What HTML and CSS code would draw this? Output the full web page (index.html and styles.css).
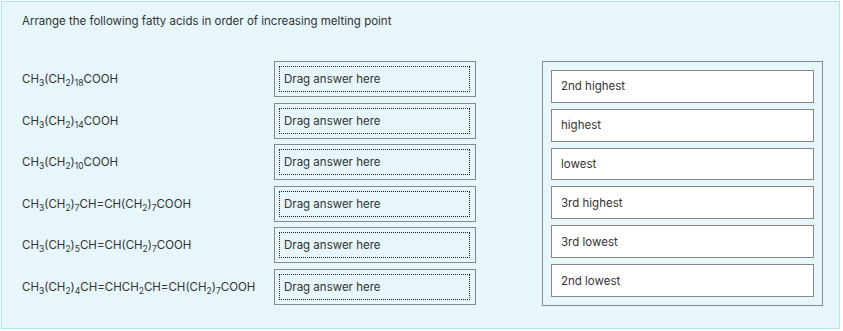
FILE: index.html
```html
<!DOCTYPE html>
<html lang="en">
<head>
    <meta charset="UTF-8">
    <meta name="viewport" content="width=device-width, initial-scale=1.0">
    <title>Fatty acids</title>
    <link rel="stylesheet" href="styles.css">
</head>
<body>
    <div class="question">
        <div class="prompt">Arrange the following fatty acids in order of increasing melting point</div>

        <div class="body">
            <div class="pairs">
                <div class="pair">
                    <div class="formula">CH<sub>3</sub>(CH<sub>2</sub>)<sub>18</sub>COOH</div>
                    <div class="drop"><div class="drop-inner">Drag answer here</div></div>
                </div>
                <div class="pair">
                    <div class="formula">CH<sub>3</sub>(CH<sub>2</sub>)<sub>14</sub>COOH</div>
                    <div class="drop"><div class="drop-inner">Drag answer here</div></div>
                </div>
                <div class="pair">
                    <div class="formula">CH<sub>3</sub>(CH<sub>2</sub>)<sub>10</sub>COOH</div>
                    <div class="drop"><div class="drop-inner">Drag answer here</div></div>
                </div>
                <div class="pair">
                    <div class="formula">CH<sub>3</sub>(CH<sub>2</sub>)<sub>7</sub>CH=CH(CH<sub>2</sub>)<sub>7</sub>COOH</div>
                    <div class="drop"><div class="drop-inner">Drag answer here</div></div>
                </div>
                <div class="pair">
                    <div class="formula">CH<sub>3</sub>(CH<sub>2</sub>)<sub>5</sub>CH=CH(CH<sub>2</sub>)<sub>7</sub>COOH</div>
                    <div class="drop"><div class="drop-inner">Drag answer here</div></div>
                </div>
                <div class="pair">
                    <div class="formula">CH<sub>3</sub>(CH<sub>2</sub>)<sub>4</sub>CH=CHCH<sub>2</sub>CH=CH(CH<sub>2</sub>)<sub>7</sub>COOH</div>
                    <div class="drop"><div class="drop-inner">Drag answer here</div></div>
                </div>
            </div>

            <div class="answers">
                <div class="answer">2nd highest</div>
                <div class="answer">highest</div>
                <div class="answer">lowest</div>
                <div class="answer">3rd highest</div>
                <div class="answer">3rd lowest</div>
                <div class="answer">2nd lowest</div>
            </div>
        </div>
    </div>
</body>
</html>
```

FILE: styles.css
```css
body {
    font-family: Inter, "Noto Sans", sans-serif;
    font-size: 11.5px;
    color: #333;
    background-color: white;
    margin: 0;
    padding: 1px;
}
.question {
    width: 839px;
    height: 328px;
    box-sizing: border-box;
    background-color: #e6f6fa;
    border: 1px solid #b2e4ee;
    padding: 0 0 0 20px;
}
.prompt {
    margin-top: 12px;
    line-height: 15px;
}
.body {
    display: flex;
    margin-top: 32px;
}
.pairs {
    width: 520px;
    padding-top: 0;
}
.pair {
    display: flex;
    align-items: center;
    height: 36px;
    margin-bottom: 5.6px;
}
.formula {
    width: 252px;
}
sub {
    font-size: 8.5px;
    vertical-align: -2.5px;
    line-height: 0;
}
.drop {
    width: 202px;
    height: 36px;
    box-sizing: border-box;
    border: 1px solid #888;
    padding: 4px 5px 4px 4px;
}
.drop-inner {
    height: 100%;
    box-sizing: border-box;
    border: 1px dotted #222;
    padding-left: 4px;
    display: flex;
    align-items: center;
}
.answers {
    width: 281px;
    height: 245px;
    box-sizing: border-box;
    border: 1px solid #888;
    padding: 8px;
    display: flex;
    flex-direction: column;
    gap: 6px;
}
.answer {
    height: 33px;
    box-sizing: border-box;
    background-color: white;
    border: 1px solid #888;
    padding-left: 9px;
    display: flex;
    align-items: center;
}
```
